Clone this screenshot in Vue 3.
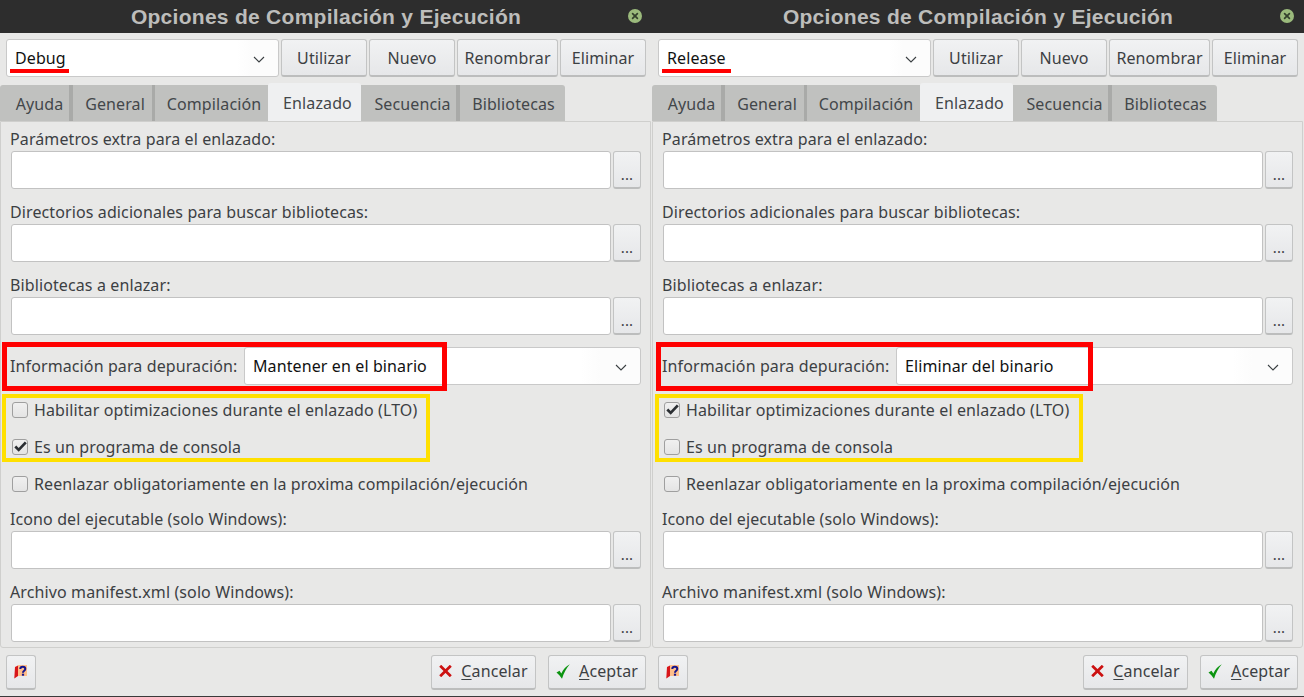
<script setup>
const panels = [
  { combo: 'Debug', debug: 'Mantener en el binario', lto: false, con: true, ul: 59, red: 2, redW: 445, yl: 2, ylW: 428 },
  { combo: 'Release', debug: 'Eliminar del binario', lto: true, con: false, ul: 69, red: 4, redW: 437, yl: 3, ylW: 428 },
]
const tabs = ['Ayuda', 'General', 'Compilación', 'Enlazado', 'Secuencia', 'Bibliotecas']
const actions = ['Utilizar', 'Nuevo', 'Renombrar', 'Eliminar']
</script>

<template>
  <div class="screen">
    <section v-for="p in panels" :key="p.combo" class="win">
      <header class="title">
        <span class="title-text">Opciones de Compilación y Ejecución</span>
        <svg class="close" width="14" height="14" viewBox="0 0 14 14">
          <circle cx="7" cy="7" r="7" fill="#9bba7c" />
          <path d="M4.6 4.6l4.8 4.8M9.4 4.6l-4.8 4.8" stroke="#33402c" stroke-width="1.7" stroke-linecap="round" />
        </svg>
      </header>

      <div class="toolbar">
        <div class="combo main-combo">
          <span class="combo-text">{{ p.combo }}</span>
          <svg class="chev" width="12" height="7" viewBox="0 0 12 7"><path d="M1 1l5 5 5-5" fill="none" stroke="#3a3f42" stroke-width="1.1" /></svg>
        </div>
        <button v-for="a in actions" :key="a" class="btn act" :class="'act-' + a">{{ a }}</button>
      </div>

      <nav class="tabs">
        <div v-for="t in tabs" :key="t" class="tab" :class="['tab-' + t, { on: t === 'Enlazado' }]">{{ t }}</div>
      </nav>

      <div class="page">
        <div class="field">
          <label>Parámetros extra para el enlazado:</label>
          <div class="row"><div class="input"></div><button class="btn dots">...</button></div>
        </div>
        <div class="field">
          <label>Directorios adicionales para buscar bibliotecas:</label>
          <div class="row"><div class="input"></div><button class="btn dots">...</button></div>
        </div>
        <div class="field">
          <label>Bibliotecas a enlazar:</label>
          <div class="row"><div class="input"></div><button class="btn dots">...</button></div>
        </div>
        <div class="debug-row">
          <label>Información para depuración:</label>
          <div class="combo debug-combo">
            <span class="combo-text">{{ p.debug }}</span>
            <svg class="chev" width="12" height="7" viewBox="0 0 12 7"><path d="M1 1l5 5 5-5" fill="none" stroke="#3a3f42" stroke-width="1.1" /></svg>
          </div>
        </div>
        <div class="checks">
          <div class="check">
            <span class="box"><svg v-if="p.lto" width="13" height="11" viewBox="0 0 13 11"><path d="M1.300 5.500l3.400 3.400L11.800 1.300" fill="none" stroke="#2b2f33" stroke-width="2.700" /></svg></span>
            Habilitar optimizaciones durante el enlazado (LTO)
          </div>
          <div class="check">
            <span class="box"><svg v-if="p.con" width="13" height="11" viewBox="0 0 13 11"><path d="M1.300 5.500l3.400 3.400L11.800 1.300" fill="none" stroke="#2b2f33" stroke-width="2.700" /></svg></span>
            Es un programa de consola
          </div>
          <div class="check">
            <span class="box"></span>
            Reenlazar obligatoriamente en la proxima compilación/ejecución
          </div>
        </div>
        <div class="field lower">
          <label>Icono del ejecutable (solo Windows):</label>
          <div class="row"><div class="input"></div><button class="btn dots">...</button></div>
        </div>
        <div class="field">
          <label>Archivo manifest.xml (solo Windows):</label>
          <div class="row"><div class="input"></div><button class="btn dots">...</button></div>
        </div>
      </div>

      <footer class="bottom">
        <button class="btn help">
          <svg width="14" height="15" viewBox="0 0 14 15">
            <rect x="4" y="0" width="9" height="11" fill="#ffbe8a" />
            <path d="M4 .5L1 2 .3 13.500 4 11z" fill="#d8161a" />
            <path d="M6.300 4c0-3 5-3 5 0 0 1.900-2.300 1.800-2.300 3.800" fill="none" stroke="#14148c" stroke-width="2" />
            <rect x="7.900" y="8.700" width="2.200" height="2" fill="#14148c" />
          </svg>
        </button>
        <span class="grow"></span>
        <button class="btn cancel">
          <svg width="13" height="12" viewBox="0 0 13 12"><path d="M1.200 .8l10.600 10.400M11.800 .8L1.200 11.200" stroke="#cc1111" stroke-width="2.800" /></svg>
          <span><u>C</u>ancelar</span>
        </button>
        <button class="btn accept">
          <svg width="14" height="15" viewBox="0 0 14 15"><path d="M.5 8.500l3-1.700 1.800 2.700C7.300 5.500 10 2.300 13.800 .3 10.500 4 7.800 9 6 14.800 4.300 12.300 2.500 10.200 .5 8.500z" fill="#0b9410" /></svg>
          <span><u>A</u>ceptar</span>
        </button>
      </footer>

      <i class="mark underline" :style="{ width: p.ul + 'px' }"></i>
      <i class="mark redbox" :style="{ left: p.red + 'px', width: p.redW + 'px' }"></i>
      <i class="mark yellowbox" :style="{ left: p.yl + 'px', width: p.ylW + 'px' }"></i>
    </section>
  </div>
</template>

<style scoped>
.screen {
  display: flex;
  width: 1304px;
  height: 697px;
  overflow: hidden;
  font-family: "Noto Sans", sans-serif;
  font-size: 16px;
  letter-spacing: 0.11px;
  color: #3c4043;
  background: #e8e8e7;
}
.win {
  position: relative;
  width: 652px;
  height: 697px;
  display: flex;
  flex-direction: column;
  border-bottom: 1px solid #3a3a3a;
  box-sizing: border-box;
}
.title {
  position: relative;
  height: 33px;
  flex: none;
  background: #2d2d2d;
  display: flex;
  align-items: center;
  justify-content: center;
}
.title-text {
  font-family: "Liberation Sans", sans-serif;
  font-weight: 700;
  font-size: 21px;
  letter-spacing: 0.28px;
  color: #bdbdbb;
}
.close { position: absolute; left: 628px; top: 9px; }
.toolbar {
  display: flex;
  height: 38px;
  margin-top: 6px;
  padding-left: 6px;
  flex: none;
}
.combo {
  position: relative;
  box-sizing: border-box;
  background: linear-gradient(90deg, #fff 85%, #fcfcfc 90%);
  border: 1px solid #c9c9c9;
  border-radius: 3px;
  display: flex;
  align-items: center;
  color: #111;
}
.main-combo { width: 273px; padding-left: 8px; margin-right: 2px; }
.chev { position: absolute; right: 13px; top: 16px; }
.btn {
  box-sizing: border-box;
  font: inherit;
  letter-spacing: inherit;
  color: #3c4043;
  border: 1px solid #c3c4c4;
  border-bottom: 2px solid #bcbdbd;
  border-radius: 3px;
  background: linear-gradient(#f1f2f3, #e6e7e9);
  padding: 0;
}
.act { height: 38px; margin-right: 2px; }
.act-Utilizar { width: 86px; }
.act-Nuevo { width: 86px; }
.act-Renombrar { width: 101px; }
.act-Eliminar { width: 86px; }
.tabs {
  display: flex;
  align-items: flex-end;
  height: 38px;
  margin-top: 6px;
  flex: none;
}
.tab {
  height: 36px;
  box-sizing: border-box;
  background: #c0c1bf;
  display: flex;
  align-items: center;
  justify-content: center;
  padding-top: 1px;
  color: #43474a;
}
.tab-Ayuda { width: 73px; padding-left: 10px; border-right: 4px solid #a9aaa8; border-radius: 3px 0 0 0; }
.tab-General { width: 82px; padding-left: 5px; border-right: 3px solid #a9aaa8; }
.tab-Compilación { width: 113px; padding-left: 5px; }
.tab.on {
  width: 93px;
  height: 38px;
  padding-left: 6px;
  padding-top: 2px;
  background: #eff0f1;
  border-radius: 3px 3px 0 0;
}
.tab-Secuencia { width: 99px; padding-left: 8px; border-right: 4px solid #a9aaa8; }
.tab-Bibliotecas { width: 105px; padding-left: 2px; border-radius: 0 3px 0 0; }
.page {
  box-sizing: border-box;
  height: 527px;
  width: 651px;
  flex: none;
  padding: 6px 9px 0 9px;
  border: 1px solid #cfcfcd;
  border-radius: 0 0 3px 3px;
  background: #e8e8e7;
}
label { display: block; height: 23px; line-height: 22px; color: #3c4043; }
.field { height: 73px; }
.row { display: flex; height: 38px; padding-left: 1px; }
.input {
  box-sizing: border-box;
  width: 600px;
  height: 38px;
  flex: none;
  background: #fff;
  border: 1px solid #c2c2c2;
  border-radius: 3px;
}
.dots {
  width: 28px;
  height: 38px;
  flex: none;
  margin-left: 2px;
  padding-top: 8px;
  font-size: 15px;
}
.debug-row { display: flex; align-items: center; height: 38px; }
.debug-row label { height: 22px; margin-right: 4px; white-space: nowrap; width: 230px; }
.debug-combo { width: 397px; height: 38px; padding-left: 8px; }
.checks { margin-top: 6px; }
.check { display: flex; align-items: center; height: 37px; color: #3c4043; }
.box {
  box-sizing: border-box;
  width: 16px;
  height: 16px;
  flex: none;
  margin: 0 6px 0 2px;
  border: 1px solid #9f9f9f;
  border-radius: 3px;
  background: linear-gradient(#f0f0f0, #e4e4e4);
  display: flex;
  align-items: center;
  justify-content: center;
}
.lower { margin-top: 6px; }
.bottom {
  flex: none;
  display: flex;
  align-items: flex-start;
  padding: 7px 6px 0 6px;
}
.grow { flex: 1; }
.help {
  width: 30px;
  height: 35px;
  display: flex;
  align-items: center;
  justify-content: center;
}
.cancel, .accept {
  height: 35px;
  display: flex;
  align-items: center;
  justify-content: center;
  gap: 9px;
  padding-bottom: 2px;
}
.cancel { width: 105px; margin-right: 12px; }
.accept { width: 98px; }
u { text-underline-offset: 2px; }
.mark { position: absolute; display: block; box-sizing: border-box; }
.underline { left: 10px; top: 69px; height: 4px; background: #ff0000; }
.redbox { top: 342px; height: 49px; border: 5px solid #ff0000; }
.yellowbox { top: 394px; height: 68px; border: 4px solid #ffe000; }
</style>
